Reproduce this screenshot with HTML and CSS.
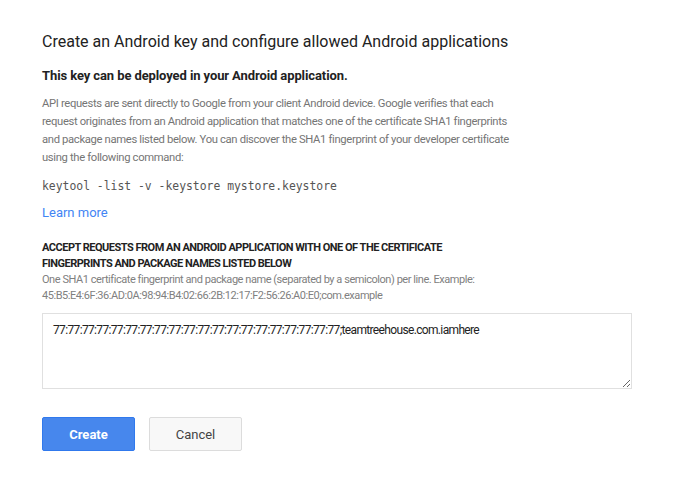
FILE: index.html
```html
<!DOCTYPE html>
<html>
<head>
<meta charset="utf-8">
<link rel="stylesheet" href="styles.css">
</head>
<body>
<div class="dialog">
  <h1 class="title">Create an Android key and configure allowed Android applications</h1>
  <p class="subtitle">This key can be deployed in your Android application.</p>
  <p class="desc">API requests are sent directly to Google from your client Android device. Google verifies that each<br>request originates from an Android application that matches one of the certificate SHA1 fingerprints<br>and package names listed below. You can discover the SHA1 fingerprint of your developer certificate<br>using the following command:</p>
  <p class="code">keytool -list -v -keystore mystore.keystore</p>
  <a class="learn" href="#">Learn more</a>
  <p class="label">ACCEPT REQUESTS FROM AN ANDROID APPLICATION WITH ONE OF THE CERTIFICATE<br>FINGERPRINTS AND PACKAGE NAMES LISTED BELOW</p>
  <p class="hint">One SHA1 certificate fingerprint and package name (separated by a semicolon) per line. Example:<br>45:B5:E4:6F:36:AD:0A:98:94:B4:02:66:2B:12:17:F2:56:26:A0:E0;com.example</p>
  <textarea class="input">77:77:77:77:77:77:77:77:77:77:77:77:77:77:77:77:77:77:77:77;teamtreehouse.com.iamhere</textarea>
  <div class="actions">
    <button class="btn btn-primary">Create</button>
    <button class="btn btn-default">Cancel</button>
  </div>
</div>
</body>
</html>
```

FILE: styles.css
```css
html, body {
  margin: 0;
  padding: 0;
  background: #ffffff;
}

body {
  font-family: Roboto, "Liberation Sans", sans-serif;
  color: #222222;
}

.dialog {
  padding: 32px 20px 0 42px;
  display: flex;
  flex-direction: column;
  align-items: flex-start;
}

.title {
  margin: 0;
  font-size: 16px;
  line-height: 20px;
  font-weight: 400;
  color: #222222;
}

.subtitle {
  margin: 15px 0 0;
  font-size: 13px;
  line-height: 18px;
  font-weight: 700;
  color: #222222;
  letter-spacing: -0.1px;
}

.desc {
  margin: 10px 0 0;
  font-size: 11.25px;
  line-height: 18px;
  letter-spacing: -0.34px;
  color: #757575;
  white-space: nowrap;
}

.code {
  margin: 10px 0 0;
  font-family: "DejaVu Sans Mono", "Liberation Mono", monospace;
  font-size: 11.4px;
  line-height: 18px;
  color: #555555;
}

.learn {
  margin-top: 9px;
  font-size: 13px;
  line-height: 18px;
  color: #4285f4;
  text-decoration: none;
}

.label {
  margin: 18px 0 0;
  font-size: 11px;
  line-height: 16px;
  font-weight: 700;
  letter-spacing: -0.5px;
  color: #222222;
  white-space: nowrap;
}

.hint {
  margin: 0;
  font-size: 11px;
  line-height: 16px;
  letter-spacing: -0.45px;
  color: #808080;
  white-space: nowrap;
}

.input {
  box-sizing: border-box;
  margin-top: 9px;
  width: 590px;
  height: 76px;
  padding: 7px 10px;
  border: 1px solid #e0e0e0;
  border-radius: 0;
  font-family: Roboto, "Liberation Sans", sans-serif;
  font-size: 12px;
  line-height: 18px;
  letter-spacing: -0.65px;
  color: #222222;
  background: #ffffff;
  outline: none;
}

.actions {
  margin-top: 28px;
  display: flex;
  gap: 14px;
}

.btn {
  box-sizing: border-box;
  height: 34px;
  width: 93px;
  border-radius: 2px;
  font-family: Roboto, "Liberation Sans", sans-serif;
  font-size: 13px;
  cursor: pointer;
}

.btn-primary {
  background: #4787ed;
  border: 1px solid #3079ed;
  color: #ffffff;
  font-weight: 700;
}

.btn-default {
  background: #f8f8f8;
  border: 1px solid #dcdcdc;
  color: #444444;
  font-weight: 400;
}
```
